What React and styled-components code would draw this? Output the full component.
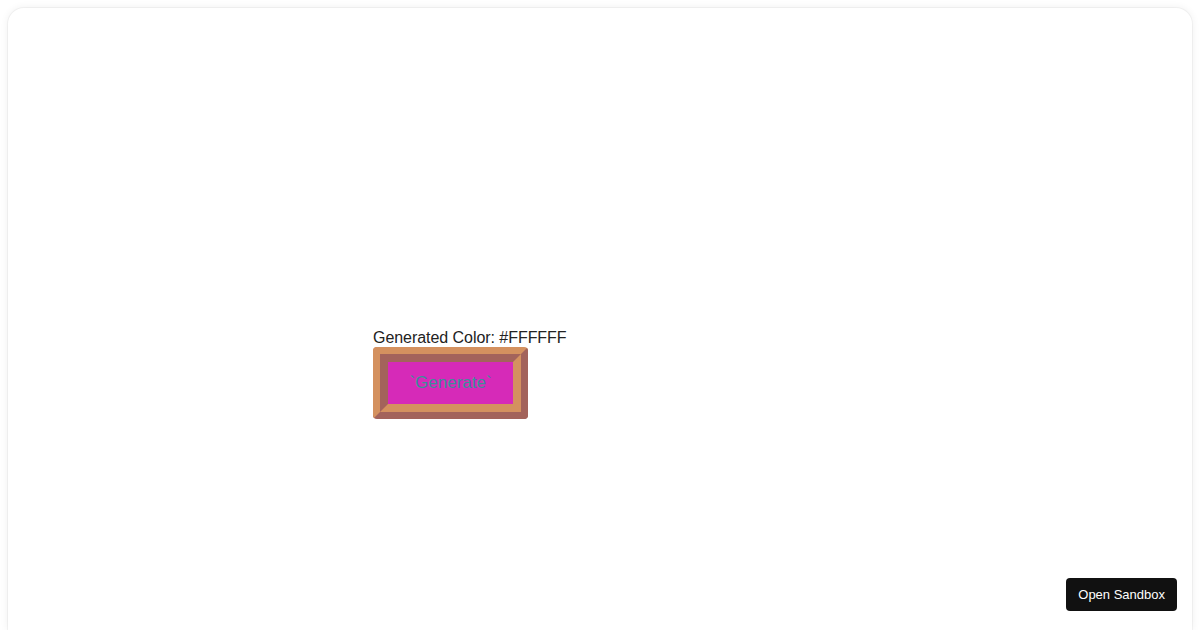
import React from "react";
import styled, { createGlobalStyle } from "styled-components";

const Global = createGlobalStyle`
  html, body { margin: 0; padding: 0; background: #ffffff; overflow: hidden; }
  body { font-family: "Liberation Sans", Arial, sans-serif; }
`;

const Card = styled.div`
  margin: 8px 8px 0 8px;
  height: calc(100vh - 8px);
  background: #ffffff;
  border-radius: 16px 16px 0 0;
  box-shadow: 0 0 0 1px rgba(0, 0, 0, 0.035), 0 0 8px rgba(0, 0, 0, 0.07);
  padding: 320px 0 0 365px;
  box-sizing: border-box;
`;

const Column = styled.div`
  display: flex;
  flex-direction: column;
  align-items: flex-start;
`;

const Label = styled.div`
  font-size: 16px;
  letter-spacing: -0.05px;
  color: #222222;
  line-height: 19px;
`;

const GenerateButton = styled.button`
  padding: 0;
  margin: 0;
  cursor: pointer;
  border-style: solid;
  border-width: 7px;
  border-color: #d4915f #a3635b #a3635b #d4915f;
  border-radius: 4px;
  background: #d62ab8;
  font-family: "Liberation Sans", Arial, sans-serif;
`;

const Face = styled.span`
  display: flex;
  align-items: center;
  justify-content: center;
  width: 125px;
  height: 42px;
  border-style: solid;
  border-width: 8px;
  border-color: #a3635b #d4915f #d4915f #a3635b;
  background: #d62ab8;
  color: #3a8f9a;
  font-size: 17px;
`;

const SandboxButton = styled.button`
  position: fixed;
  right: 23px;
  bottom: 19px;
  height: 33px;
  padding: 0 12px;
  border: none;
  border-radius: 4px;
  background: #111111;
  color: #ffffff;
  font-family: "Liberation Sans", Arial, sans-serif;
  font-size: 13px;
  cursor: pointer;
`;

export default function App() {
  return (
    <>
      <Global />
      <Card>
        <Column>
          <Label>Generated Color: #FFFFFF</Label>
          <GenerateButton>
            <Face>`Generate`</Face>
          </GenerateButton>
        </Column>
      </Card>
      <SandboxButton>Open Sandbox</SandboxButton>
    </>
  );
}
